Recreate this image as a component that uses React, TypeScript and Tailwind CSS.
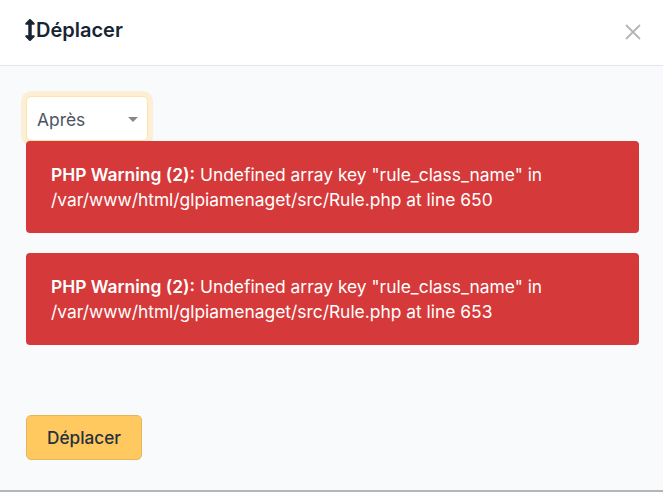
import { FaArrowsAltV } from 'react-icons/fa'

const WARNINGS = [650, 653]

function PhpWarning({ line }: { line: number }) {
  return (
    <div className="relative mb-5 h-[92px] rounded bg-[#d63939] px-[25px] py-[21px] text-[17.4px] leading-[25px] text-white">
      <b className="font-semibold">PHP Warning (2):</b> Undefined array key "rule_class_name" in
      <br />
      /var/www/html/glpiamenaget/src/Rule.php at line {line}
    </div>
  )
}

export default function App() {
  return (
    <div className="flex h-[492px] w-[663px] flex-col overflow-hidden bg-white font-['Inter',sans-serif]">
      <header className="flex h-[66px] shrink-0 items-center justify-between border-b border-[#e3e6ec] pb-[5px] pl-[24px] pr-[21px]">
        <h1 className="flex items-center text-[20px] font-semibold text-[#182433]">
          <FaArrowsAltV className="w-[12px] text-[22px]" />
          Déplacer
        </h1>
        <svg width="18" height="18" viewBox="0 0 18 18" className="mt-[3px] text-[#b5b5b5]">
          <path d="M2 2 L16 16 M16 2 L2 16" stroke="currentColor" strokeWidth="1.8" fill="none" />
        </svg>
      </header>

      <main className="flex grow flex-col bg-[#f9fafc] px-[26px] pt-[30px]">
        <div className="flex h-[45px] w-[122px] shrink-0 items-center justify-between rounded-[5px] border border-[#ffe3ad] bg-white pl-[10px] pr-[9px] pt-[4px] text-[17.4px] text-[#4b5563] shadow-[0_0_0_5px_#fdeed6]">
          Après
          <span className="mb-[3px] h-0 w-0 border-x-[5px] border-t-[5px] border-x-transparent border-t-[#888888]" />
        </div>
        <div className="w-[613px]">
          {WARNINGS.map((line) => (
            <PhpWarning key={line} line={line} />
          ))}
        </div>
        <button className="mt-[50px] h-[45px] w-[116px] rounded-[5px] border border-[#e5b65c] bg-[#ffc95f] text-[17.2px] font-[450] text-[#26303e]">
          Déplacer
        </button>
      </main>
      <div className="h-[2px] shrink-0 bg-[#b3b5b8]" />
    </div>
  )
}
